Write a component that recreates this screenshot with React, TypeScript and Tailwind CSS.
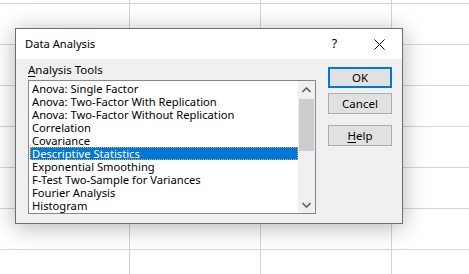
import React from 'react';

const tools = [
  'Anova: Single Factor',
  'Anova: Two-Factor With Replication',
  'Anova: Two-Factor Without Replication',
  'Correlation',
  'Covariance',
  'Descriptive Statistics',
  'Exponential Smoothing',
  'F-Test Two-Sample for Variances',
  'Fourier Analysis',
  'Histogram',
];

const rowHeights = ['h-[4px]', 'h-[41px]', 'h-[41px]', 'h-[41px]', 'h-[41px]', 'h-[41px]', 'h-[41px]', 'h-[41px]'];
const colWidths = ['w-[130px]', 'w-[131px]', 'w-[131px]', 'w-[131px]'];

function Sheet() {
  return (
    <div className="flex flex-col">
      {rowHeights.map((h, r) => (
        <div key={r} className={`flex ${h}`}>
          {colWidths.map((w, c) => (
            <div key={c} className={`${w} shrink-0 border-r border-b border-[#d4d4d4]`} />
          ))}
        </div>
      ))}
    </div>
  );
}

export default function App() {
  const [selected, setSelected] = React.useState(5);

  return (
    <div className="w-[469px] h-[274px] relative overflow-hidden bg-white font-['Segoe_UI','Noto_Sans',sans-serif] text-[11.2px] text-black">
      <Sheet />

      {/* Dialog */}
      <div className="absolute left-[15px] top-[28px] w-[388px] h-[196px] flex flex-col border border-[#6e6e6e] bg-[#f0f0f0] shadow-[0_3px_22px_rgba(0,0,0,0.3)]">
        {/* Title bar */}
        <div className="h-[30px] bg-white flex items-center shrink-0">
          <div className="flex-1 pl-[9px] text-[11.2px] leading-none">Data Analysis</div>
          <div className="w-[45px] h-full flex items-center justify-center text-[12.5px]">?</div>
          <div className="w-[45px] h-full flex items-center justify-center">
            <svg width="11" height="11" viewBox="0 0 11 11">
              <path d="M0.5 0.5 L10.5 10.5 M10.5 0.5 L0.5 10.5" stroke="#000" strokeWidth="1" />
            </svg>
          </div>
        </div>

        {/* Body */}
        <div className="flex flex-1 pl-[12px] pr-[10px]">
          <div className="w-[288px] flex flex-col pt-[3px]">
            <div className="h-[16px] leading-[16px] text-[11.5px]">
              <span className="underline underline-offset-2">A</span>nalysis Tools
            </div>
            <div className="mt-[2px] h-[134px] flex border border-[#828790] bg-white">
              <div className="flex-1 pt-[1px] pl-[1px] flex flex-col">
                {tools.map((t, i) => (
                  <div
                    key={t}
                    onClick={() => setSelected(i)}
                    className={
                      i === selected
                        ? 'h-[13px] leading-[11px] pl-[1px] whitespace-nowrap bg-[#0078d7] text-white border border-dotted border-[#f5a34a]'
                        : 'h-[13px] leading-[13px] pl-[2px] whitespace-nowrap'
                    }
                  >
                    {t}
                  </div>
                ))}
              </div>
              {/* Scrollbar */}
              <div className="w-[17px] bg-[#f0f0f0] flex flex-col items-center">
                <div className="h-[17px] w-full flex items-center justify-center">
                  <svg width="9" height="6" viewBox="0 0 9 6">
                    <path d="M0.5 5 L4.5 1 L8.5 5" fill="none" stroke="#606060" strokeWidth="1.6" />
                  </svg>
                </div>
                <div className="mt-[1px] h-[52px] w-[15px] bg-[#cdcdcd]" />
                <div className="flex-1" />
                <div className="h-[17px] w-full flex items-center justify-center">
                  <svg width="9" height="6" viewBox="0 0 9 6">
                    <path d="M0.5 1 L4.5 5 L8.5 1" fill="none" stroke="#606060" strokeWidth="1.6" />
                  </svg>
                </div>
              </div>
            </div>
          </div>

          <div className="ml-[12px] w-[64px] flex flex-col pt-[8px]">
            <button className="h-[21px] w-full border-2 border-[#0078d7] bg-[#e1e1e1] leading-none text-[11.5px]">OK</button>
            <button className="mt-[5px] h-[21px] w-full border border-[#adadad] bg-[#e1e1e1] leading-none text-[11.5px]">Cancel</button>
            <button className="mt-[11px] h-[21px] w-full border border-[#adadad] bg-[#e1e1e1] leading-none text-[11.5px]">
              <span className="underline underline-offset-2">H</span>elp
            </button>
          </div>
        </div>
      </div>
    </div>
  );
}
